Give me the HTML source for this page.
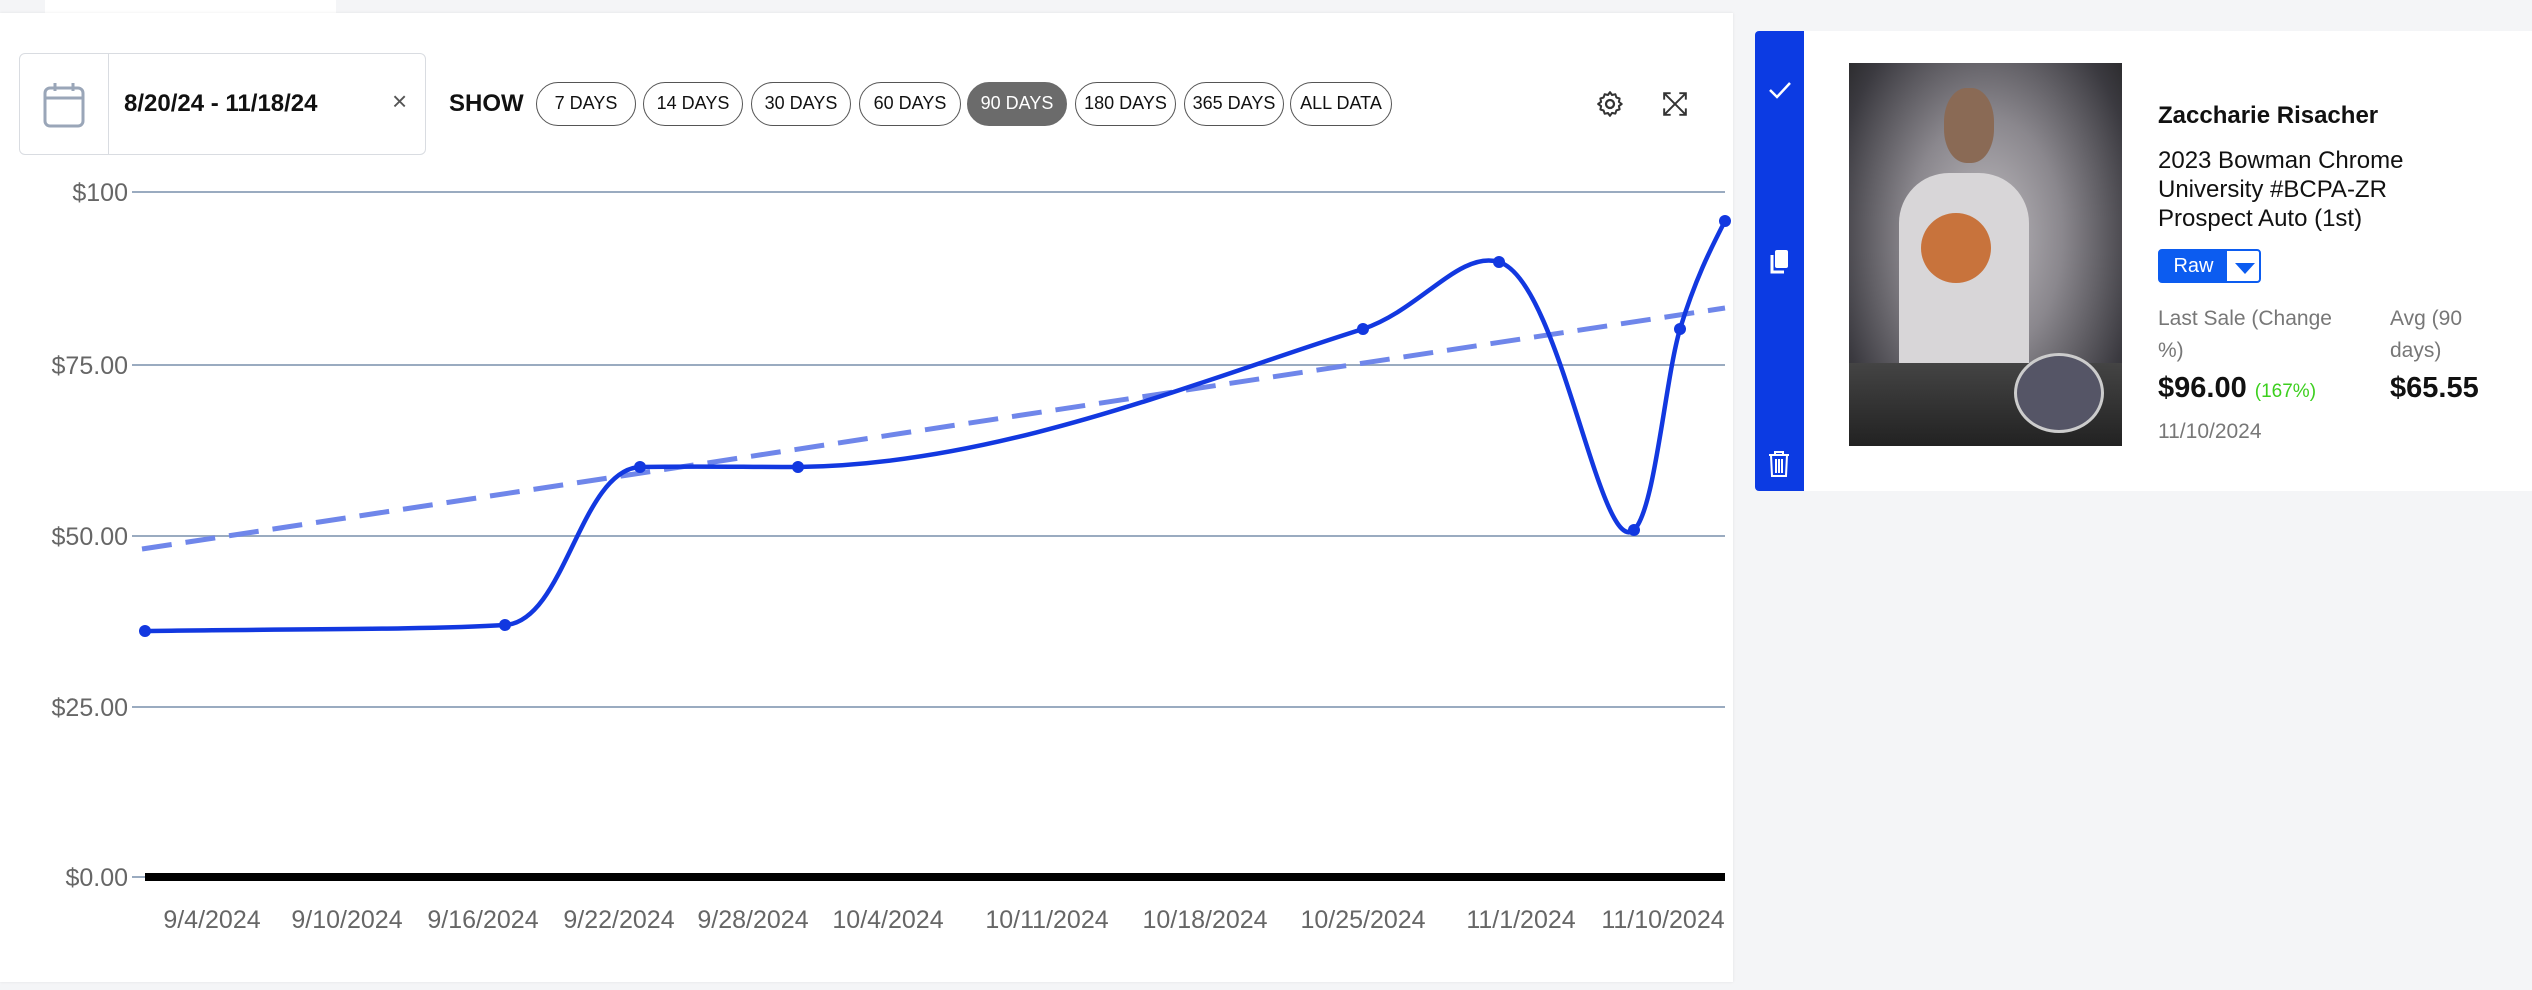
<!DOCTYPE html>
<html><head><meta charset="utf-8"><style>
*{margin:0;padding:0;box-sizing:border-box}
body{width:2532px;height:990px;background:#f4f5f7;font-family:"Liberation Sans",sans-serif;position:relative;overflow:hidden}
.main{position:absolute;left:0;top:13px;width:1733px;height:969px;background:#fff;box-shadow:0 0 3px rgba(0,0,0,.08)}
.tab{position:absolute;left:45px;top:0;width:291px;height:14px;background:#fff}
.date{position:absolute;left:19px;top:53px;width:407px;height:102px;border:1px solid #d9dce1;border-radius:6px;background:#fff}
.date .div{position:absolute;left:88px;top:0;bottom:0;border-left:1px solid #d9dce1}
.date .txt{position:absolute;left:104px;top:36px;font-size:24px;font-weight:bold;color:#111}
.date .x{position:absolute;left:372px;top:32px;font-size:26px;color:#555}
.show{position:absolute;left:449px;top:90px;font-size:24px;font-weight:bold;color:#111}
.pill{position:absolute;top:82px;height:44px;border:1.5px solid #555;border-radius:22px;font-size:18px;line-height:41px;text-align:center;color:#111;background:#fff}
.pill.on{background:#6b6b6b;color:#fff;border-color:#6b6b6b}
.side{position:absolute;left:1755px;top:31px;width:49px;height:460px;background:#0c3be3;border-radius:4px 0 0 4px}
.card{position:absolute;left:1804px;top:31px;width:728px;height:460px;background:#fff}
.img{position:absolute;left:1849px;top:63px;width:273px;height:383px;background:radial-gradient(ellipse at 50% 45%,#bfbcc0 0%,#8a878d 40%,#3b3a40 80%,#222 100%);overflow:hidden}
.t{position:absolute;color:#111}
</style></head><body>
<div class="tab"></div>
<div class="main"></div>
<div class="date"><div class="div"></div>
<svg style="position:absolute;left:22px;top:28px" width="44" height="48" viewBox="0 0 44 48"><rect x="3" y="6" width="38" height="38" rx="5" fill="none" stroke="#9aa6b8" stroke-width="3"/><line x1="3" y1="16" x2="41" y2="16" stroke="#9aa6b8" stroke-width="3"/><line x1="13" y1="1" x2="13" y2="9" stroke="#9aa6b8" stroke-width="3"/><line x1="31" y1="1" x2="31" y2="9" stroke="#9aa6b8" stroke-width="3"/></svg>
<div class="txt">8/20/24 - 11/18/24</div><div class="x">×</div></div>
<div class="show">SHOW</div>
<div class="pill" style="left:536px;width:100px">7 DAYS</div>
<div class="pill" style="left:643px;width:100px">14 DAYS</div>
<div class="pill" style="left:751px;width:100px">30 DAYS</div>
<div class="pill" style="left:859px;width:102px">60 DAYS</div>
<div class="pill on" style="left:967px;width:100px">90 DAYS</div>
<div class="pill" style="left:1075px;width:101px">180 DAYS</div>
<div class="pill" style="left:1184px;width:100px">365 DAYS</div>
<div class="pill" style="left:1290px;width:102px">ALL DATA</div>
<svg style="position:absolute;left:1595px;top:89px" width="30" height="30" viewBox="0 0 24 24"><circle cx="12" cy="12" r="3.2" fill="none" stroke="#333" stroke-width="1.8"/><path d="M12 2.5l1.6 2.3 2.7-.6.8 2.6 2.6.8-.6 2.7 2.3 1.7-2.3 1.6.6 2.7-2.6.8-.8 2.6-2.7-.6L12 21.5l-1.6-2.3-2.7.6-.8-2.6-2.6-.8.6-2.7L2.5 12l2.4-1.7-.6-2.7 2.6-.8.8-2.6 2.7.6z" fill="none" stroke="#333" stroke-width="1.6" stroke-linejoin="round"/></svg>
<svg style="position:absolute;left:1662px;top:91px" width="26" height="26" viewBox="0 0 24 24" fill="none" stroke="#333" stroke-width="1.8"><path d="M2 8V2h6M16 2h6v6M22 16v6h-6M8 22H2v-6M2 2l20 20M22 2L2 22"/></svg>
<svg style="position:absolute;left:0;top:0" width="1740" height="990">
<g stroke="#9aabc0" stroke-width="2"><line x1="132" y1="192" x2="1725" y2="192"/><line x1="132" y1="365" x2="1725" y2="365"/><line x1="132" y1="536" x2="1725" y2="536"/><line x1="132" y1="707" x2="1725" y2="707"/><line x1="132" y1="877" x2="145" y2="877"/></g>
<line x1="145" y1="877" x2="1725" y2="877" stroke="#000" stroke-width="8"/>
<g font-size="25" fill="#666" text-anchor="end" font-family="Liberation Sans"><text x="128" y="201">$100</text><text x="128" y="374">$75.00</text><text x="128" y="545">$50.00</text><text x="128" y="716">$25.00</text><text x="128" y="886">$0.00</text></g>
<g font-size="25" fill="#666" text-anchor="middle" font-family="Liberation Sans"><text x="212" y="928">9/4/2024</text><text x="347" y="928">9/10/2024</text><text x="483" y="928">9/16/2024</text><text x="619" y="928">9/22/2024</text><text x="753" y="928">9/28/2024</text><text x="888" y="928">10/4/2024</text><text x="1047" y="928">10/11/2024</text><text x="1205" y="928">10/18/2024</text><text x="1363" y="928">10/25/2024</text><text x="1521" y="928">11/1/2024</text><text x="1663" y="928">11/10/2024</text></g>
<line x1="142" y1="549" x2="1725" y2="308" stroke="#6f86ea" stroke-width="5" stroke-dasharray="30,14"/>
<path d="M145,631 C265,629 425,630 505,625 C565,622 580,470 640,467 C700,466 740,467 798,467 C1000,465 1200,380 1363,329 C1420,310 1460,250 1499,262 C1560,280 1600,560 1634,530 C1655,510 1665,380 1680,329 C1695,280 1710,250 1725,221" fill="none" stroke="#1238e0" stroke-width="4.5"/>
<g fill="#1238e0"><circle cx="145" cy="631" r="6"/><circle cx="505" cy="625" r="6"/><circle cx="640" cy="467" r="6"/><circle cx="798" cy="467" r="6"/><circle cx="1363" cy="329" r="6"/><circle cx="1499" cy="262" r="6"/><circle cx="1634" cy="530" r="6"/><circle cx="1680" cy="329" r="6"/><circle cx="1725" cy="221" r="6"/></g>
</svg>
<div class="side">
<svg style="position:absolute;left:13px;top:49px" width="24" height="20" viewBox="0 0 24 20"><path d="M2 10l7 7L22 3" fill="none" stroke="#fff" stroke-width="2.5"/></svg>
<svg style="position:absolute;left:13px;top:218px" width="22" height="26" viewBox="0 0 22 26"><rect x="7" y="1" width="13" height="18" rx="2" fill="#fff"/><path d="M4 6v17h12" fill="none" stroke="#fff" stroke-width="3"/></svg>
<svg style="position:absolute;left:13px;top:419px" width="22" height="28" viewBox="0 0 22 28" fill="none" stroke="#fff" stroke-width="2"><path d="M1 5h20M7 5V2h8v3M3 5l1 21h14l1-21M8 9v14M11 9v14M14 9v14"/></svg>
</div>
<div class="card"></div>
<div class="img">
<div style="position:absolute;left:50px;top:110px;width:130px;height:250px;border-radius:50px 50px 10px 10px;background:#d8d6d8"></div>
<div style="position:absolute;left:95px;top:25px;width:50px;height:75px;border-radius:45%;background:#8a6a55"></div>
<div style="position:absolute;left:72px;top:150px;width:70px;height:70px;border-radius:50%;background:#c8733c"></div>
<div style="position:absolute;left:0;top:300px;width:273px;height:83px;background:linear-gradient(#444,#222)"></div>
<div style="position:absolute;left:165px;top:290px;width:90px;height:80px;border-radius:50%;background:#556;border:3px solid #ccc"></div></div>
<div class="t" style="left:2158px;top:102px;font-size:24px;font-weight:bold">Zaccharie Risacher</div>
<div class="t" style="left:2158px;top:146px;font-size:24px;line-height:29px">2023 Bowman Chrome<br>University #BCPA-ZR<br>Prospect Auto (1st)</div>
<div style="position:absolute;left:2158px;top:249px;width:103px;height:34px;border:2px solid #0c5cf0;border-radius:4px;background:#fff">
<div style="position:absolute;left:0;top:0;width:67px;height:30px;background:#0c5cf0;color:#fff;font-size:20px;line-height:30px;text-align:center">Raw</div>
<svg style="position:absolute;left:74px;top:10px" width="22" height="14"><path d="M1 2h20L11 13z" fill="#0c5cf0"/></svg></div>
<div class="t" style="left:2158px;top:303px;font-size:21px;line-height:32px;color:#777">Last Sale (Change<br>%)</div>
<div class="t" style="left:2390px;top:303px;font-size:21px;line-height:32px;color:#777">Avg (90<br>days)</div>
<div class="t" style="left:2158px;top:372px;font-size:29px;font-weight:bold">$96.00 <span style="font-size:19px;color:#3ccf1e;font-weight:normal">(167%)</span></div>
<div class="t" style="left:2390px;top:372px;font-size:29px;font-weight:bold">$65.55</div>
<div class="t" style="left:2158px;top:420px;font-size:21px;color:#777">11/10/2024</div>
</body></html>
